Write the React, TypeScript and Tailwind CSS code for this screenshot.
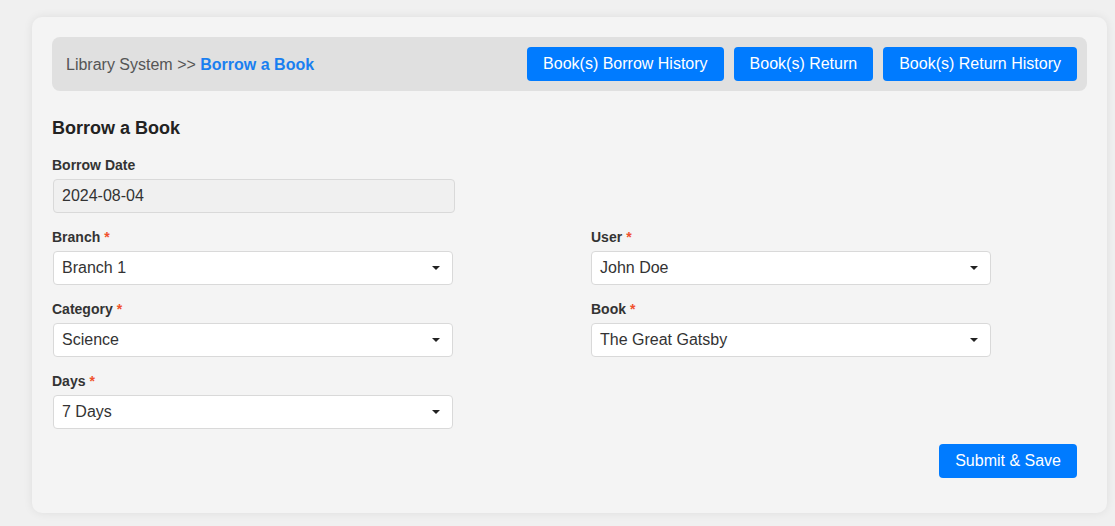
import React from 'react';

const font = { fontFamily: '"Liberation Sans", Arial, sans-serif' };

const Caret: React.FC = () => (
  <svg width="8" height="4" viewBox="0 0 8 4" className="shrink-0">
    <path d="M0 0 L8 0 L4 4 Z" fill="#222" />
  </svg>
);

interface SelectProps {
  value: string;
  right?: boolean;
}

const FakeSelect: React.FC<SelectProps> = ({ value, right }) => (
  <div
    className={`${right ? '' : 'ml-px'} w-[400px] h-[34px] flex items-center justify-between pl-[8px] pr-[12px] bg-white border border-[#d9d9d9] rounded-[4px] text-[16px] text-[#333]`}
  >
    <span>{value}</span>
    <Caret />
  </div>
);

const Label: React.FC<{ text: string; required?: boolean }> = ({ text, required }) => (
  <label className="block h-[16px] leading-[16px] text-[14px] font-bold text-[#333] mb-[6px]">
    {text}
    {required && <span className="text-[#f0502c] ml-[4px]">*</span>}
  </label>
);

const App: React.FC = () => {
  const navButtons = ['Book(s) Borrow History', 'Book(s) Return', 'Book(s) Return History'];

  return (
    <div className="min-h-[526px] bg-[#f0f0f0] pt-[17px] pl-[32px]" style={font}>
      <div className="w-[1075px] h-[496px] bg-[#f4f4f4] rounded-[10px] shadow-[0_0_10px_rgba(0,0,0,0.08)] p-[20px]">
        {/* Top bar with breadcrumb and navigation */}
        <div className="h-[54px] bg-[#e0e0e0] rounded-[8px] flex items-center justify-between pl-[14px] pr-[10px]">
          <div className="text-[16px] text-[#555] pt-px">
            Library System &gt;&gt; <span className="font-bold text-[#1a7ff0]">Borrow a Book</span>
          </div>
          <div className="flex gap-[10px]">
            {navButtons.map((b) => (
              <button
                key={b}
                className="h-[34px] px-[16px] bg-[#007bff] text-white text-[16px] rounded-[4px]"
              >
                {b}
              </button>
            ))}
          </div>
        </div>

        <h2 className="mt-[27px] h-[21px] leading-[21px] text-[18px] font-bold text-[#222]">Borrow a Book</h2>

        {/* Form */}
        <div className="mt-[18px] grid grid-cols-[499px_1fr] gap-x-[40px] gap-y-[16px]">
          <div>
            <Label text="Borrow Date" />
            <div className="ml-px w-[402px] h-[34px] flex items-center pl-[8px] bg-[#f0f0f0] border border-[#d9d9d9] rounded-[4px] text-[16px] text-[#333]">
              2024-08-04
            </div>
          </div>
          <div />
          <div>
            <Label text="Branch" required />
            <FakeSelect value="Branch 1" />
          </div>
          <div>
            <Label text="User" required />
            <FakeSelect value="John Doe" right />
          </div>
          <div>
            <Label text="Category" required />
            <FakeSelect value="Science" />
          </div>
          <div>
            <Label text="Book" required />
            <FakeSelect value="The Great Gatsby" right />
          </div>
          <div>
            <Label text="Days" required />
            <FakeSelect value="7 Days" />
          </div>
        </div>

        <div className="mt-[15px] flex justify-end pr-[10px]">
          <button className="h-[34px] px-[16px] bg-[#007bff] text-white text-[16px] rounded-[4px]">
            Submit &amp; Save
          </button>
        </div>
      </div>
    </div>
  );
};

export default App;
